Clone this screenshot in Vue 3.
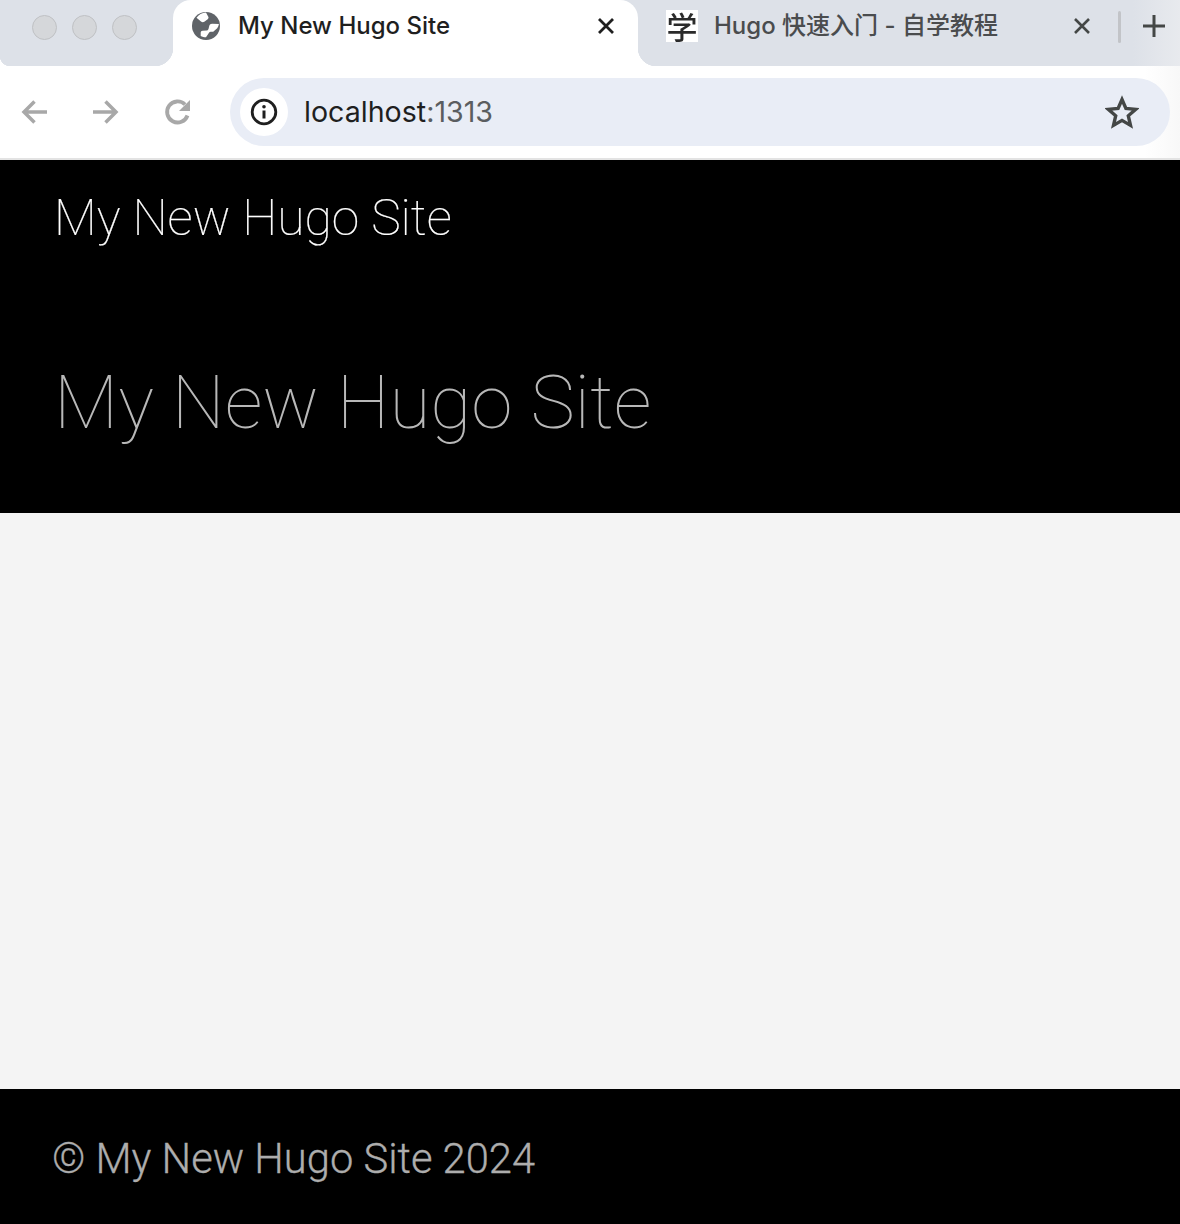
<script setup>
const tabTitle = 'My New Hugo Site'
const year = 2024
</script>

<template>
  <div class="page">
    <div class="chrome">
      <div class="strip">
        <div class="lights">
          <span class="light"></span><span class="light"></span><span class="light"></span>
        </div>
        <div class="tab active">
          <svg class="globe" width="30" height="30" viewBox="0 0 30 30">
            <circle cx="15" cy="15" r="14" fill="#5f6368"/>
            <path d="M15 1.500c-4 .2-7.500 2.200-9.500 5.300l4.500 3.700c1 .8 2.300.9 3.300.2l3.400-2.500c1-.7 1.100-2 .3-2.900L15 1.500z" fill="#fff"/>
            <path d="M28 13l-7-.3c-1.300 0-2.400.8-2.700 2l-.8 3.300c-.2.900-1 1.500-1.900 1.500l-4.100.3c-1 .1-1.800.9-1.800 1.900v3.200c1.600.9 3.400 1.400 5.300 1.400l3-4.600c.4-.6 1-1 1.700-1h2.500l4-3.500c.9-1.300 1.500-2.800 1.800-4.500z" fill="#fff"/>
          </svg>
          <span class="tab-title">{{ tabTitle }}</span>
          <svg class="close" width="16" height="16" viewBox="0 0 16 16"><path d="M1 1l14 14M15 1L1 15" stroke="#1f1f1f" stroke-width="2.800"/></svg>
        </div>
        <div class="rest">
          <div class="tab second">
            <span class="fav"><span class="fav-glyph">学</span></span>
            <span class="tab-title dim">Hugo 快速入门 - 自学教程</span>
            <svg class="close" width="16" height="16" viewBox="0 0 16 16"><path d="M1 1l14 14M15 1L1 15" stroke="#444746" stroke-width="2.600"/></svg>
          </div>
          <span class="divider"></span>
          <svg class="plus" width="22" height="22" viewBox="0 0 22 22"><path d="M11 0v22M0 11h22" stroke="#444746" stroke-width="3"/></svg>
        </div>
      </div>
      <div class="toolbar">
        <div class="navs">
          <svg width="28" height="28" viewBox="0 0 28 28" fill="none" stroke="#a8a8a8" stroke-width="3.500"><path d="M27 14H4M14.500 3.500L4 14l10.500 10.500"/></svg>
          <svg width="28" height="28" viewBox="0 0 28 28" fill="none" stroke="#a8a8a8" stroke-width="3.500"><path d="M1 14h23M13.500 3.500L24 14 13.500 24.500"/></svg>
          <svg width="28" height="28" viewBox="0 0 28 28" fill="none"><path d="M23.500 17.500A10.500 10.500 0 1 1 21 6.500" stroke="#a8a8a8" stroke-width="3.800"/><path d="M26 2v11H15z" fill="#a8a8a8"/></svg>
        </div>
        <div class="omnibox">
          <span class="info">
            <svg width="28" height="28" viewBox="0 0 28 28" fill="none"><circle cx="14" cy="14" r="11.800" stroke="#1f1f1f" stroke-width="2.800"/><path d="M14 12.500v8" stroke="#1f1f1f" stroke-width="3"/><circle cx="14" cy="8.800" r="1.800" fill="#1f1f1f"/></svg>
          </span>
          <span class="url"><span class="host">localhost</span><span class="port">:1313</span></span>
          <svg class="star" width="34" height="34" viewBox="0 0 34 34" fill="none"><path d="M17 4.500l3.900 9 9.800.9-7.400 6.400 2.200 9.600L17 25.400l-8.500 5 2.200-9.600-7.400-6.400 9.800-.9z" stroke="#444746" stroke-width="3.400"/></svg>
        </div>
      </div>
    </div>
    <header class="hero">
      <a class="brand">My New Hugo Site</a>
      <h1 class="title">My New Hugo Site</h1>
    </header>
    <main class="content"></main>
    <footer class="foot">© My New Hugo Site {{ year }}</footer>
  </div>
</template>

<style scoped>
.page {
  width: 1180px;
  height: 1224px;
  display: flex;
  flex-direction: column;
  overflow: hidden;
  background: #f4f4f4;
  font-family: Roboto, "Noto Sans", sans-serif;
}
.chrome { background: #fff; }
.strip {
  position: relative;
  height: 66px;
  display: flex;
  background: linear-gradient(90deg, #dde1e8 96%, #e8eaee);
}
.strip::after {
  content: "";
  position: absolute;
  left: 0;
  bottom: 0;
  width: 10px;
  height: 10px;
  background: radial-gradient(circle at 100% 0, transparent 10px, #fff 10.500px);
}
.lights {
  width: 173px;
  display: flex;
  gap: 15px;
  padding: 15px 0 0 32px;
  box-sizing: border-box;
}
.light {
  width: 25px;
  height: 25px;
  box-sizing: border-box;
  border-radius: 50%;
  background: #d5d7da;
  border: 1px solid #bfc1c4;
}
.tab { display: flex; align-items: center; }
.tab.active {
  position: relative;
  width: 465px;
  height: 66px;
  padding: 0 24px 14px 18px;
  box-sizing: border-box;
  background: #fff;
  border-radius: 18px 18px 0 0;
}
.tab.active::before,
.tab.active::after {
  content: "";
  position: absolute;
  bottom: 0;
  width: 18px;
  height: 18px;
}
.tab.active::before {
  left: -18px;
  background: radial-gradient(circle at 0 0, transparent 18px, #fff 18.500px);
}
.tab.active::after {
  right: -18px;
  background: radial-gradient(circle at 100% 0, transparent 18px, #fff 18.500px);
}
.globe { flex: none; }
.tab-title {
  margin-left: 17px;
  font: 500 24px/1 Inter, "Noto Sans CJK SC", sans-serif;
  color: #1f1f1f;
  white-space: nowrap;
  flex: 1;
}
.tab-title.dim { color: #4a4c4e; margin-left: 16px; }
.rest {
  flex: 1;
  display: flex;
  align-items: flex-start;
}
.tab.second {
  width: 480px;
  height: 52px;
  padding: 0 28px 0 28px;
  box-sizing: border-box;
  flex: none;
}
.fav {
  flex: none;
  width: 32px;
  height: 32px;
  background: #fff;
}
.fav-glyph {
  display: block;
  color: #2a2a2a;
  font: 500 31px/32px "Noto Sans CJK SC", sans-serif;
  text-align: center;
  filter: blur(0.6px);
}
.divider {
  flex: none;
  width: 3px;
  height: 32px;
  margin-top: 11px;
  background: #c2c4c8;
  border-radius: 2px;
}
.plus { flex: none; margin: 15px 0 0 22px; }
.toolbar {
  height: 94px;
  box-sizing: border-box;
  display: flex;
  align-items: center;
  padding: 0 10px 0 20px;
  background: linear-gradient(90deg, #fff 97%, #f8f8f8);
  border-bottom: 2px solid #e3e3e3;
}
.navs {
  display: flex;
  align-items: center;
  gap: 44px;
  width: 210px;
}
.omnibox {
  flex: 1;
  height: 68px;
  display: flex;
  align-items: center;
  padding: 0 31px 0 10px;
  border-radius: 34px;
  background: #e9edf6;
}
.info {
  width: 48px;
  height: 48px;
  border-radius: 50%;
  background: #fff;
  display: flex;
  align-items: center;
  justify-content: center;
}
.url {
  flex: 1;
  margin-left: 16px;
  font: 400 28.600px/1 Inter, sans-serif;
}
.host { color: #1f1f1f; }
.port { color: #5a5d60; }
.hero {
  height: 353px;
  box-sizing: border-box;
  background: #000;
  padding: 28px 0 0 54px;
  flex: none;
}
.brand {
  display: block;
  color: #fff;
  font-size: 49.800px;
  font-weight: 100;
  line-height: 60px;
  -webkit-text-stroke: 0.2px #fff;
}
.title {
  margin: 110px 0 0;
  color: #b8b8b8;
  font-size: 74.800px;
  font-weight: 100;
  line-height: 90px;
}
.content { flex: 1; background: #f4f4f4; }
.foot {
  height: 135px;
  box-sizing: border-box;
  flex: none;
  background: #000;
  color: #adadad;
  padding: 0 0 0 52px;
  font-size: 41.700px;
  font-weight: 300;
  line-height: 140px;
  -webkit-text-stroke: 0.3px #adadad;
}
</style>
